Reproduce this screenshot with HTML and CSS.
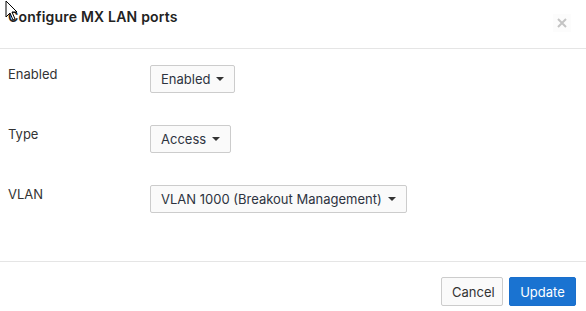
FILE: index.html
```html
<!DOCTYPE html>
<html>
<head>
<meta charset="utf-8">
<link rel="stylesheet" href="styles.css">
</head>
<body>
<div class="modal">
  <div class="modal-header">
    <h1 class="title">Configure MX LAN ports</h1>
    <button class="close" aria-label="Close">
      <svg width="10" height="10" viewBox="0 0 10 10"><path d="M1 1L9 9M9 1L1 9" stroke="#c4c4c4" stroke-width="2"/></svg>
    </button>
  </div>
  <div class="modal-body">
    <div class="row">
      <div class="label">Enabled</div>
      <button class="dropdown">Enabled <span class="caret"></span></button>
    </div>
    <div class="row">
      <div class="label">Type</div>
      <button class="dropdown">Access <span class="caret"></span></button>
    </div>
    <div class="row">
      <div class="label">VLAN</div>
      <button class="dropdown">VLAN 1000 (Breakout Management) <span class="caret"></span></button>
    </div>
  </div>
  <div class="modal-footer">
    <button class="btn btn-default">Cancel</button>
    <button class="btn btn-primary">Update</button>
  </div>
</div>
<svg class="cursor" width="14" height="22" viewBox="0 0 14 22"><path d="M1 1 L1 17 L5 13 L8 20 L10 19 L7 12 L12 12 Z" fill="#fff" stroke="#000" stroke-width="1" stroke-linejoin="round"/></svg>
</body>
</html>
```
FILE: styles.css
```css
html, body {
  margin: 0;
  padding: 0;
  background: #fff;
}
body {
  font-family: Inter, "Noto Sans", sans-serif;
  color: #333;
  width: 586px;
  height: 311px;
  overflow: hidden;
  position: relative;
}
.modal {
  display: flex;
  flex-direction: column;
}
.modal-header {
  height: 48px;
  border-bottom: 1px solid #e5e5e5;
  display: flex;
  align-items: flex-start;
  justify-content: space-between;
  padding: 0 15px 0 8px;
}
.title {
  margin: 8px 0 0;
  font-size: 14px;
  font-weight: 600;
  line-height: 18px;
  color: #222;
  letter-spacing: 0.2px;
}
.close {
  margin-top: 14px;
  width: 18px;
  height: 18px;
  border: 0;
  background: #fcfcfc;
  padding: 0;
  display: flex;
  align-items: center;
  justify-content: center;
}
.modal-body {
  padding: 16px 8px 0;
  display: flex;
  flex-direction: column;
  gap: 32px;
  height: 212px;
  box-sizing: border-box;
}
.row {
  display: grid;
  grid-template-columns: 142px auto;
  align-items: start;
}
.label {
  font-size: 13px;
  line-height: 16px;
  padding-top: 1px;
  color: #333;
}
.dropdown {
  justify-self: start;
  height: 28px;
  box-sizing: border-box;
  border: 1px solid #ccc;
  border-radius: 2px;
  background: #fafafa;
  font-family: inherit;
  font-size: 13px;
  color: #2d3340;
  padding: 0 10px;
  display: flex;
  align-items: center;
  gap: 6px;
}
.caret {
  width: 0;
  height: 0;
  border-left: 4px solid transparent;
  border-right: 4px solid transparent;
  border-top: 4px solid #333;
}
.modal-footer {
  border-top: 1px solid #e5e5e5;
  padding: 15px 10px 0;
  display: flex;
  justify-content: flex-end;
  gap: 6px;
}
.btn {
  height: 29px;
  box-sizing: border-box;
  font-family: inherit;
  font-size: 13px;
  border-radius: 2px;
  padding: 0 10px;
}
.btn-default {
  border: 1px solid #ccc;
  background: #fafafa;
  color: #333;
  width: 62px;
}
.btn-primary {
  border: 1px solid #1a6fcc;
  background: #1a73d1;
  color: #fff;
  width: 67px;
}
.cursor {
  position: absolute;
  left: 5px;
  top: 0;
}
```
